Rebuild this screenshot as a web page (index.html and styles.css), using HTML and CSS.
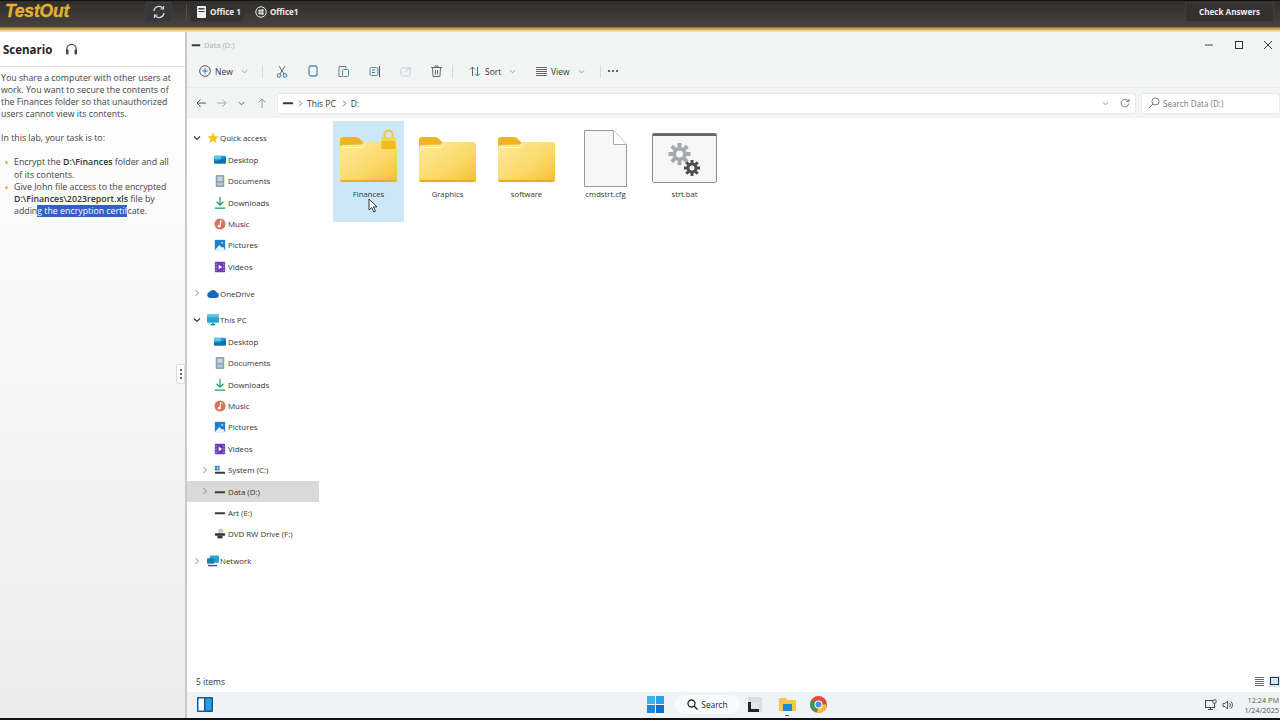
FILE: index.html
```html
<!DOCTYPE html>
<html lang="en">
<head>
<meta charset="utf-8">
<title>TestOut Lab</title>
<link rel="stylesheet" href="styles.css">
</head>
<body>
<svg class="defs" width="0" height="0" aria-hidden="true">
  <defs>
    <linearGradient id="fg" x1="0" y1="0" x2="1" y2="1"><stop offset="0" stop-color="#fdeaa0"/><stop offset=".6" stop-color="#fbd867"/><stop offset="1" stop-color="#f3bf35"/></linearGradient>
    <symbol id="folder" viewBox="0 0 57 45">
      <path d="M0 3a3 3 0 0 1 3-3h13c2 0 3 1 4 2l4 4v8H0z" fill="#eeb425"/>
      <path d="M0 11a3 3 0 0 1 3-3l18-.5 4-2.500h29a3 3 0 0 1 3 3V42a3 3 0 0 1-3 3H3a3 3 0 0 1-3-3z" fill="url(#fg)"/>
      <path d="M1 10h21l3-3v1l-3 3H1z" fill="#fff6d8"/>
      <path d="M0 43h57v0a3 2 0 0 1-3 2H3a3 2 0 0 1-3-2z" fill="#e5ad2b"/>
    </symbol>
    <symbol id="desk" viewBox="0 0 14 12"><rect x="0" y="1" width="14" height="9" rx="1" fill="#1b9fd8"/><path d="M0 7c4 0 8-1 14-4v6a1 1 0 0 1-1 1H1a1 1 0 0 1-1-1z" fill="#0c6fb0"/><rect x="0" y="1" width="8" height="4" fill="#56c5ef"/></symbol>
    <symbol id="docs" viewBox="0 0 14 14"><rect x="2" y="0" width="10" height="14" rx="1" fill="#8da3b5"/><rect x="4" y="2" width="6" height="5" fill="#c9d6df"/><rect x="4" y="9" width="6" height="1" fill="#d8e2e9"/><rect x="4" y="11" width="6" height="1" fill="#d8e2e9"/></symbol>
    <symbol id="down" viewBox="0 0 14 14"><path d="M7 0v9M3 5.500 7 9.500l4-4" fill="none" stroke="#1f9c82" stroke-width="1.500"/><path d="M1 13h12" stroke="#1f9c82" stroke-width="1.500"/></symbol>
    <symbol id="music" viewBox="0 0 14 14"><circle cx="7" cy="7" r="6.500" fill="#d9735c"/><path d="M7.500 3v6" stroke="#fff" stroke-width="1.300"/><circle cx="6" cy="9.500" r="1.600" fill="#fff"/><path d="M7.500 3l2.500 1" stroke="#fff"/></symbol>
    <symbol id="pics" viewBox="0 0 14 14"><rect x="1" y="1" width="12" height="12" fill="#1d7fd0"/><path d="M1 13l5-6 3 3 1.500-1 2.500 4z" fill="#e8f3fb"/><circle cx="9.500" cy="4.500" r="1.300" fill="#9ed3f5"/></symbol>
    <symbol id="vids" viewBox="0 0 14 14"><rect x="1" y="1" width="12" height="12" rx="1" fill="#6d3bb8"/><path d="M5.500 4.500v5l4-2.500z" fill="#fff"/><path d="M2.500 3v1.500M2.500 6.500V8M2.500 10v1.500M11.500 3v1.500M11.500 6.500V8M11.500 10v1.500" stroke="#d9c8f2"/></symbol>
    <symbol id="drive" viewBox="0 0 14 14"><rect x="1" y="6" width="12" height="2.600" rx=".8" fill="#3a3a3a"/></symbol>
    <symbol id="chevd" viewBox="0 0 8 8"><path d="M1 2.500 4 5.500 7 2.500" fill="none" stroke="currentColor" stroke-width="1.100"/></symbol>
    <symbol id="chevr" viewBox="0 0 8 8"><path d="M2.500 1 5.500 4 2.500 7" fill="none" stroke="currentColor"/></symbol>
  </defs>
</svg>

<header class="topbar">
  <span class="logo">TestOut</span>
  <button class="sync" aria-label="Sync">
    <svg width="14" height="14" viewBox="0 0 14 14" fill="none" stroke="#ddd" stroke-width="1.200"><path d="M2 6a5 5 0 0 1 9-2.500M12 8a5 5 0 0 1-9 2.500"/><path d="M11.500 1v3h-3M2.500 13v-3h3"/></svg>
  </button>
  <span class="vsep"></span>
  <div class="crumb">
    <svg width="9" height="12" viewBox="0 0 9 12"><rect width="9" height="12" rx="1" fill="#eee"/><rect x="1.500" y="2" width="6" height="1.500" fill="#444"/><rect x="1.500" y="5" width="6" height="1" fill="#444"/></svg>
    <b>Office 1</b>
  </div>
  <div class="crumb2">
    <svg width="12" height="12" viewBox="0 0 12 12"><circle cx="6" cy="6" r="5.200" fill="none" stroke="#eee"/><path d="M3.500 3.800 5.700 3.500V5.800H3.500zM6.200 3.400 8.500 3V5.800H6.200zM3.500 6.200H5.700V8.500L3.500 8.200zM6.200 6.200H8.500V9L6.200 8.600z" fill="#eee"/></svg>
    <b>Office1</b>
  </div>
  <button class="check">Check Answers</button>
</header>
<div class="goldline"></div>

<div class="stage">
  <aside class="scenario">
    <div class="sc-head">
      <h1>Scenario</h1>
      <svg width="13" height="12" viewBox="0 0 13 12" fill="none"><path d="M1.800 8V6a4.700 4.700 0 0 1 9.400 0v2" stroke="#444" stroke-width="1.200"/><rect x="1" y="6.500" width="2.500" height="5" rx="1" fill="#444"/><rect x="9.500" y="6.500" width="2.500" height="5" rx="1" fill="#444"/></svg>
    </div>
    <div class="sc-body">
      <p>You share a computer with other users at work. You want to secure the contents of the Finances folder so that unauthorized users cannot view its contents.</p>
      <p>In this lab, your task is to:</p>
      <ul>
        <li>Encrypt the <b>D:\Finances</b> folder and all of its contents.</li>
        <li>Give John file access to the encrypted <b>D:\Finances\2023report.xls</b> file by addin<mark>g the encryption certif</mark>cate.</li>
      </ul>
    </div>
    <div class="grip"><i></i><i></i><i></i></div>
  </aside>

  <section class="explorer">
    <div class="titlebar">
      <svg class="ic" width="10" height="10"><use href="#drive"/></svg>
      <span class="wintitle">Data (D:)</span>
      <div class="winctl">
        <svg width="10" height="10" viewBox="0 0 10 10"><path d="M1 5h8" stroke="#444"/></svg>
        <svg width="10" height="10" viewBox="0 0 10 10"><rect x="1.500" y="1.500" width="7" height="7" fill="none" stroke="#333"/></svg>
        <svg width="10" height="10" viewBox="0 0 10 10"><path d="M1 1l8 8M9 1l-8 8" stroke="#333"/></svg>
      </div>
    </div>

    <div class="toolbar">
      <div class="tb-text tb-new">
        <svg width="12" height="12" viewBox="0 0 12 12" fill="none"><circle cx="6" cy="6" r="5.300" stroke="#555"/><path d="M6 3.300v5.400M3.300 6h5.400" stroke="#2a78b8"/></svg>
        <span>New</span>
        <svg class="cv" width="7" height="7"><use href="#chevd"/></svg>
      </div>
      <span class="tsep"></span>
      <div class="tb-icon"><svg width="12" height="13" viewBox="0 0 12 13" fill="none"><path d="M3 1l5 8M9 1L4 9" stroke="#666"/><circle cx="3" cy="10.500" r="1.800" stroke="#2a78b8"/><circle cx="9" cy="10.500" r="1.800" stroke="#2a78b8"/></svg></div>
      <div class="tb-icon"><svg width="10" height="12" viewBox="0 0 10 12" fill="none"><rect x="1" y="1" width="8" height="10" rx="2" stroke="#5a8db0" stroke-width="1.300"/></svg></div>
      <div class="tb-icon"><svg width="11" height="12" viewBox="0 0 11 12" fill="none"><path d="M3 1.500H1v10h3" stroke="#777"/><path d="M3 1.500h5v2" stroke="#777"/><rect x="4.500" y="4.500" width="6" height="7" rx="1" stroke="#3f8abf"/></svg></div>
      <div class="tb-icon"><svg width="12" height="11" viewBox="0 0 12 11" fill="none"><rect x="1" y="1.500" width="8" height="8" rx="1.500" stroke="#4b8fb5"/><path d="M3 4h3M3 6.500h3" stroke="#666"/><path d="M10.500 0v11" stroke="#555"/></svg></div>
      <div class="tb-icon dim"><svg width="12" height="11" viewBox="0 0 12 11" fill="none"><rect x="1" y="2" width="9" height="8" rx="1.500" stroke="#c3d2da"/><path d="M5 6l5-4M8 1.500h3v3" stroke="#c3d2da"/></svg></div>
      <div class="tb-icon"><svg width="11" height="12" viewBox="0 0 11 12" fill="none" stroke="#666"><path d="M0 2.500h11M4 2.500V1h3v1.500M1.500 2.500l.6 9h6.800l.6-9M4.500 5v4.500M6.500 5v4.500"/></svg></div>
      <span class="tsep"></span>
      <div class="tb-text tb-sort">
        <svg width="12" height="11" viewBox="0 0 12 11" fill="none"><path d="M3.500 10V1M1 3.500 3.500 1 6 3.500" stroke="#666"/><path d="M8.500 1v9M6 7.500 8.500 10 11 7.500" stroke="#2a78b8"/></svg>
        <span>Sort</span>
        <svg class="cv" width="7" height="7"><use href="#chevd"/></svg>
      </div>
      <div class="tb-text tb-view">
        <svg width="11" height="9" viewBox="0 0 11 9" stroke="#666"><path d="M0 .5h11M0 2.500h11M0 4.500h11M0 6.500h11M0 8.500h11"/></svg>
        <span>View</span>
        <svg class="cv" width="7" height="7"><use href="#chevd"/></svg>
      </div>
      <span class="tsep"></span>
      <div class="dots"><i></i><i></i><i></i></div>
    </div>

    <div class="addr">
      <svg class="nv nv1" width="10" height="10" viewBox="0 0 10 10" fill="none" stroke="#555"><path d="M10 5H1M4.500 1.500 1 5l3.500 3.500"/></svg>
      <svg class="nv nv2" width="10" height="10" viewBox="0 0 10 10" fill="none" stroke="#aaa"><path d="M0 5h9M5.500 1.500 9 5 5.500 8.500"/></svg>
      <svg class="nv nv3" width="7" height="7"><use href="#chevd"/></svg>
      <svg class="nv nv4" width="10" height="10" viewBox="0 0 10 10" fill="none" stroke="#999"><path d="M5 10V1M1.500 4.500 5 1l3.500 3.500"/></svg>
      <div class="pathbox">
        <svg width="12" height="12"><use href="#drive"/></svg>
        <svg class="sm" width="7" height="7"><use href="#chevr"/></svg>
        <span class="seg">This PC</span>
        <svg class="sm" width="7" height="7"><use href="#chevr"/></svg>
        <span>D:</span>
        <span class="grow"></span>
        <svg class="cv" width="7" height="7"><use href="#chevd"/></svg>
        <svg class="rf" width="10" height="10" viewBox="0 0 10 10" fill="none" stroke="#777"><path d="M8.700 5.500a3.800 3.800 0 1 1-1-3L9 3.500M9 .8v2.700H6.300"/></svg>
      </div>
      <div class="searchbox">
        <svg width="12" height="12" viewBox="0 0 12 12" fill="none" stroke="#777"><circle cx="7.500" cy="4.500" r="3.500"/><path d="M5 7l-4 4"/></svg>
        <span>Search Data (D:)</span>
      </div>
    </div>

    <div class="main">
      <nav class="tree">
        <div class="row l0"><svg class="tw" width="8" height="8"><use href="#chevd"/></svg><svg width="12" height="12" viewBox="0 0 12 12"><path d="M6 .5l1.700 3.600 3.800.5-2.800 2.700.7 3.900L6 8.800l-3.400 1.900.7-3.900L.5 4.600l3.800-.5z" fill="#f5c518"/></svg><span>Quick access</span></div>
        <div class="row l1"><svg class="ti"><use href="#desk"/></svg><span>Desktop</span></div>
        <div class="row l1"><svg class="ti"><use href="#docs"/></svg><span>Documents</span></div>
        <div class="row l1"><svg class="ti"><use href="#down"/></svg><span>Downloads</span></div>
        <div class="row l1"><svg class="ti"><use href="#music"/></svg><span>Music</span></div>
        <div class="row l1"><svg class="ti"><use href="#pics"/></svg><span>Pictures</span></div>
        <div class="row l1"><svg class="ti"><use href="#vids"/></svg><span>Videos</span></div>
        <div class="row l0 gap"><svg class="tw lt" width="8" height="8"><use href="#chevr"/></svg><svg width="12" height="9" viewBox="0 0 12 9"><path d="M3 9a3 3 0 0 1-.5-5.900A4 4 0 0 1 9.800 3.500 2.800 2.800 0 0 1 9.500 9z" fill="#1668b8"/></svg><span>OneDrive</span></div>
        <div class="row l0 gap"><svg class="tw" width="8" height="8"><use href="#chevd"/></svg><svg width="12" height="12" viewBox="0 0 13 12"><rect x="0" y="0" width="13" height="9" rx="1" fill="#2ba4cf"/><rect x="0" y="0" width="13" height="3" fill="#5cc6e4"/><path d="M4 11h5M6.500 9v2" stroke="#1a7799" stroke-width="1.400"/></svg><span>This PC</span></div>
        <div class="row l1"><svg class="ti"><use href="#desk"/></svg><span>Desktop</span></div>
        <div class="row l1"><svg class="ti"><use href="#docs"/></svg><span>Documents</span></div>
        <div class="row l1"><svg class="ti"><use href="#down"/></svg><span>Downloads</span></div>
        <div class="row l1"><svg class="ti"><use href="#music"/></svg><span>Music</span></div>
        <div class="row l1"><svg class="ti"><use href="#pics"/></svg><span>Pictures</span></div>
        <div class="row l1"><svg class="ti"><use href="#vids"/></svg><span>Videos</span></div>
        <div class="row l1"><svg class="tw2 lt" width="8" height="8"><use href="#chevr"/></svg><svg class="ti" viewBox="0 0 14 12"><path d="M1 1h2.500v2.500H1zM4 1h2.500v2.500H4zM1 4h2.500v2.500H1zM4 4h2.500v2.500H4z" fill="#1f7fc4"/><rect x="1" y="8" width="12" height="2.500" rx=".8" fill="#3a3a3a"/></svg><span>System (C:)</span></div>
        <div class="row l1 cur"><svg class="tw2 lt" width="8" height="8"><use href="#chevr"/></svg><svg class="ti"><use href="#drive"/></svg><span>Data (D:)</span></div>
        <div class="row l1"><svg class="ti"><use href="#drive"/></svg><span>Art (E:)</span></div>
        <div class="row l1"><svg class="ti" viewBox="0 0 14 14"><circle cx="8" cy="3.500" r="3" fill="#c8c8c8"/><rect x="1" y="6" width="12" height="3" rx=".8" fill="#333"/><rect x="4" y="9" width="6" height="3" fill="#333"/></svg><span>DVD RW Drive (F:)</span></div>
        <div class="row l0 gap"><svg class="tw lt" width="8" height="8"><use href="#chevr"/></svg><svg width="12" height="12" viewBox="0 0 13 12"><rect x="3" y="0" width="10" height="8" rx="1" fill="#2ba4cf"/><rect x="0" y="3" width="8" height="6" rx="1" fill="#1682b0"/><path d="M1 11h10" stroke="#1c5f80" stroke-width="1.500"/></svg><span>Network</span></div>
      </nav>

      <div class="files">
        <div class="tile sel">
          <div class="thumb"><svg class="fd" width="57" height="45"><use href="#folder"/></svg>
            <svg class="lock" width="15" height="20" viewBox="0 0 15 20"><path d="M3.500 9V5.500a4 4 0 0 1 8 0V9" fill="none" stroke="#eec23a" stroke-width="2"/><rect x="0.500" y="8" width="14" height="12" rx="1" fill="#f0bb1e"/><rect x="0.500" y="8" width="14" height="4" fill="#f8d64e"/></svg>
          </div>
          <span>Finances</span>
        </div>
        <div class="tile"><div class="thumb"><svg class="fd" width="57" height="45"><use href="#folder"/></svg></div><span>Graphics</span></div>
        <div class="tile"><div class="thumb"><svg class="fd" width="57" height="45"><use href="#folder"/></svg></div><span>software</span></div>
        <div class="tile"><div class="thumb"><svg width="43" height="57" viewBox="0 0 43 57"><path d="M.5.500h29l13 14v42H.500z" fill="#f7f7f7" stroke="#999"/><path d="M29.500.500v14h13" fill="#fff" stroke="#aaa"/></svg></div><span>cmdstrt.cfg</span></div>
        <div class="tile"><div class="thumb"><svg width="65" height="50" viewBox="0 0 65 50"><rect x=".5" y=".5" width="64" height="49" rx="2" fill="#f7f7f7" stroke="#8a8a8a"/><rect x=".5" y=".5" width="64" height="2.500" fill="#666"/><g fill="#a3a9ad"><circle cx="27.500" cy="21" r="7"/><g stroke="#a3a9ad" stroke-width="4"><path d="M27.500 10v22M16.500 21h22M19.700 13.200l15.600 15.600M35.300 13.200 19.700 28.800"/></g></g><circle cx="27.500" cy="21" r="3.500" fill="#f7f7f7"/><g fill="#4a4f52"><circle cx="40" cy="35" r="5.500"/><g stroke="#4a4f52" stroke-width="3"><path d="M40 27v16M32 35h16M34.300 29.300l11.400 11.400M45.700 29.300 34.300 40.700"/></g></g><circle cx="40" cy="35" r="2.500" fill="#f7f7f7"/></svg></div><span>strt.bat</span></div>
      </div>
      <svg class="cursor" width="10" height="15" viewBox="0 0 10 15"><path d="M1 1v11l2.700-2.400 2 4.400 1.800-.8-2-4.300H9z" fill="#fff" stroke="#222" stroke-width=".9"/></svg>
    </div>

    <div class="status">
      <span>5 items</span>
      <div class="views">
        <svg width="9" height="9" viewBox="0 0 9 9" stroke="#666"><path d="M0 .5h9M0 2.500h9M0 4.500h9M0 6.500h9M0 8.500h9"/></svg>
        <span class="viewon"><svg width="9" height="8" viewBox="0 0 9 8"><rect x=".5" y=".5" width="8" height="7" fill="none" stroke="#333"/></svg></span>
      </div>
    </div>

    <footer class="taskbar">
      <svg class="widgets" width="16" height="15" viewBox="0 0 16 15"><rect width="16" height="15" rx="1" fill="#0a5d9f"/><rect x="1.500" y="1.500" width="5.500" height="12" fill="#fff"/><rect x="8.500" y="1.500" width="6" height="12" fill="#2f9be3"/></svg>
      <div class="tb-center">
        <svg class="win" width="17" height="17" viewBox="0 0 17 17"><path d="M0 0h8v8H0z" fill="#3fb1ee"/><path d="M9 0h8v8H9z" fill="#2c9fe6"/><path d="M0 9h8v8H0z" fill="#1f86d6"/><path d="M9 9h8v8H9z" fill="#0f6fc4"/></svg>
        <div class="pill"><svg width="11" height="11" viewBox="0 0 11 11" fill="none" stroke="#222" stroke-width="1.300"><circle cx="4.500" cy="4.500" r="3.500"/><path d="M7 7l3.500 3.500"/></svg><span>Search</span></div>
        <svg class="app1" width="14" height="15" viewBox="0 0 14 15"><rect width="14" height="15" fill="#dcdcdc"/><rect y="5" width="11" height="10" fill="#222"/><rect x="3" y="5" width="8" height="7" fill="#e6e6e6"/></svg>
        <span class="app2"><svg width="17" height="15" viewBox="0 0 17 15"><path d="M0 1h7l2 2h8v11H0z" fill="#f5c93f"/><rect x="4" y="7" width="9" height="7" fill="#1d8ad0"/></svg><i></i></span>
        <svg class="app3" width="17" height="17" viewBox="0 0 17 17"><circle cx="8.500" cy="8.500" r="8.500" fill="#e04a3a"/><path d="M8.500 8.500 1.300 4a8.500 8.500 0 0 0 5 12.200z" fill="#2f9e4f"/><path d="M8.500 8.500h8a8.500 8.500 0 0 1-9.500 8.400z" fill="#f5c62f"/><circle cx="8.500" cy="8.500" r="4" fill="#fff"/><circle cx="8.500" cy="8.500" r="3" fill="#4a8ee8"/></svg>
      </div>
      <div class="tray">
        <svg width="12" height="12" viewBox="0 0 12 12" fill="none" stroke="#444"><rect x=".5" y="1.500" width="9" height="7"/><path d="M3 10.500h5M5.500 8.500v2"/><circle cx="9.500" cy="2.500" r="1.800" fill="#fff"/></svg>
        <svg width="12" height="10" viewBox="0 0 12 10" fill="none" stroke="#555"><path d="M1 3.500v3h2L5.500 9V1L3 3.500zM7.500 3a3 3 0 0 1 0 4M9 1.500a5 5 0 0 1 0 7"/></svg>
        <div class="clock"><span>12:24 PM</span><span>1/24/2025</span></div>
      </div>
    </footer>
  </section>
</div>
<div class="blackline"></div>
</body>
</html>
```

FILE: styles.css
```css
* { box-sizing: border-box; }
html, body { margin: 0; height: 720px; overflow: hidden; }
body {
  display: flex; flex-direction: column; width: 1280px;
  font-family: "Open Sans", "Noto Sans", sans-serif; color: #333; background: #fff;
}
.defs { position: absolute; }
svg { display: block; flex: none; }
button { font-family: inherit; }

.topbar {
  height: 27px; display: flex; align-items: center; flex: none; padding-bottom: 5px;
  border-top: 1px solid #111;
  background: linear-gradient(#2f2e2c, #45433f);
  color: #eee;
}
.logo {
  width: 145px; padding-left: 5px;
  font: italic bold 17.500px "Liberation Sans", sans-serif; color: #e6b02f; letter-spacing: -.2px;
  -webkit-text-stroke: .3px #e6b02f;
}
.sync {
  width: 27px; height: 20px; display: flex; align-items: center; justify-content: center; padding: 0;
  background: #37363a; border: 1px solid #3f3e3c; border-radius: 2px;
}
.vsep { width: 1px; height: 18px; background: #4c4b48; margin: 0 4px 0 14px; }
.crumb {
  width: 56px; height: 20px; display: flex; align-items: center; gap: 4px; padding-left: 6px;
  background: #333230; font-size: 8.100px;
  clip-path: polygon(0 0, 88% 0, 100% 50%, 88% 100%, 0 100%);
}
.crumb2 { display: flex; align-items: center; gap: 3px; margin-left: 8px; font-size: 8px; }
.check {
  margin-left: auto; margin-right: 6px; width: 89px; height: 20px; padding: 0;
  background: #333230; border: 1px solid #3f3e3c; color: #eee; font-size: 8.100px; font-weight: 700;
}
.goldline {
  height: 5px; flex: none;
  background: linear-gradient(#8f6a1c, #c9a24a 35%, #ecd9a6 80%, #dfe6e6);
}

.stage { flex: 1; min-height: 0; display: flex; }
.blackline { height: 2px; flex: none; background: #111; }

/* Scenario panel */
.scenario {
  position: relative; width: 187px; flex: none;
  background: linear-gradient(#fff, #fafafa 30%, #ececec);
  border-right: 2px solid #c9c9c9;
}
.sc-head {
  height: 35px; display: flex; align-items: center; gap: 13px; padding-left: 3px;
  border-bottom: 1px solid #e2e2e2; background: #fff;
}
.sc-head h1 { margin: 0; font-size: 11.500px; font-weight: 700; color: #222; }
.sc-body { padding: 5px 0 0 1px; font-size: 8.800px; line-height: 12.100px; color: #444; }
.sc-body p { margin: 0 0 12px; width: 172px; }
.sc-body ul { margin: 0; padding: 0 0 0 13px; list-style: none; width: 172px; }
.sc-body li { position: relative; }
.sc-body li::before {
  content: ""; position: absolute; left: -9px; top: 5px; width: 3px; height: 3px;
  border-radius: 50%; background: #e6b64a;
}
.sc-body b { color: #333; font-weight: 600; }
mark { background: #2f62c4; color: #fff; }
.grip {
  position: absolute; right: 0; top: 332px; width: 9px; height: 20px;
  display: flex; flex-direction: column; align-items: center; justify-content: center; gap: 2px;
  background: #fff; border-radius: 2px; border: 1px solid #ddd;
}
.grip i { width: 2px; height: 2px; background: #333; border-radius: 50%; }

/* Explorer */
.explorer { flex: 1; min-width: 0; display: flex; flex-direction: column; font-size: 7.900px; color: #333; }
.titlebar {
  height: 25px; flex: none; display: flex; align-items: center; gap: 3px; padding: 0 7px 0 4px;
  background: #f2f4f4; font-size: 7.600px;
}
.wintitle { color: #aab0b3; }
.winctl { margin-left: auto; display: flex; gap: 19.500px; }

.toolbar {
  height: 31px; flex: none; display: flex; align-items: center; padding: 0 0 2px 12px;
  background: #f3f5f5; border-bottom: 1px solid #ebeded; font-size: 8.500px;
}
.tb-text { display: flex; align-items: center; gap: 4px; }
.tb-new { width: 63px; }
.tb-sort { width: 67px; margin-left: 16px; }
.tb-view { width: 61px; margin-right: 3px; }
.cv { color: #999; margin-left: 4px; }
.tsep { width: 1px; height: 13px; background: #d8dada; }
.tb-new + .tsep { margin-right: 3px; }
.tb-icon { width: 31px; display: flex; justify-content: center; }
.dots { display: flex; gap: 2px; margin-left: 7px; }
.dots i { width: 2px; height: 2px; background: #333; border-radius: 50%; }

.addr {
  height: 30px; flex: none; display: flex; align-items: center; padding-left: 9px;
  background: #f3f5f5;
}
.nv { color: #555; }
.nv2 { margin-left: 11px; }
.nv3 { margin-left: 11px; }
.nv4 { margin-left: 12px; }
.pathbox {
  margin-left: 10px; width: 859px; height: 21px; display: flex; align-items: center; gap: 3px; padding: 0 5px 0 4px;
  background: #fff; border: 1px solid #e8e9e9; border-radius: 2px; font-size: 8.500px;
}
.seg { margin-right: 2px; }
.sm { color: #666; }
.grow { flex: 1; }
.rf { margin-left: 8px; }
.pathbox .cv { margin-left: 0; }
.searchbox {
  margin-left: 5px; flex: 1; height: 21px; display: flex; align-items: center; gap: 3px; padding-left: 6px;
  background: #fff; border: 1px solid #e8e9e9; border-radius: 2px; color: #777; font-size: 8.100px;
}

.main { position: relative; flex: 1; min-height: 0; display: flex; background: #fff; }
.tree { width: 132px; flex: none; padding-top: 9.800px; }
.row { height: 21.400px; display: flex; align-items: center; position: relative; }
.row.l0 { padding-left: 20px; gap: 1px; }
.row.l1 { padding-left: 27px; gap: 2px; }
.ti { width: 12px; height: 12px; }
.row.gap { margin-top: 5.400px; }
.row.cur { background: #d9d9d9; }
.tw, .tw2 { position: absolute; top: 6.500px; color: #333; }
.tw { left: 6px; }
.tw2 { left: 14px; }
.lt { color: #888; }

.files { flex: 1; display: flex; align-items: flex-start; gap: 8px; padding: 3px 0 0 14px; }
.tile {
  width: 71px; height: 101px; display: flex; flex-direction: column; align-items: center;
  color: #333; font-size: 7.700px;
}
.tile.sel { background: #cce8f8; }
.thumb { position: relative; height: 74px; width: 100%; flex: none; display: flex; align-items: center; justify-content: center; }
.thumb .fd { margin-top: 3px; }
.tile span { margin-top: -6px; }
.lock { position: absolute; left: 48px; top: 8px; }
.cursor { position: absolute; left: 181px; top: 80px; }

.status {
  height: 20px; flex: none; display: flex; align-items: center; justify-content: space-between; padding: 0 0 2px 9px;
  background: #fff; font-size: 8.500px;
}
.views { display: flex; align-items: center; gap: 5px; }
.viewon { width: 11px; height: 11px; display: flex; align-items: center; justify-content: center; background: #cfe8f7; }

.taskbar {
  position: relative; height: 26px; flex: none; display: flex; align-items: center; padding: 0 0 1px 10px;
  background: #f0f3f5;
}
.tb-center { display: flex; align-items: center; margin-left: 434px; }
.pill {
  width: 65px; height: 19px; margin-left: 11px; display: flex; align-items: center; justify-content: center; gap: 3px;
  background: #f9fafb; border-radius: 10px; color: #222; font-size: 8.300px;
}
.app1 { margin-left: 8px; }
.app2 { position: relative; margin-left: 17px; }
.app2 i { position: absolute; left: 6px; bottom: -4px; width: 4px; height: 1.500px; background: #666; }
.app3 { margin-left: 14px; }
.tray { margin-left: auto; display: flex; align-items: center; gap: 5px; padding-right: 1px; }
.clock { display: flex; flex-direction: column; align-items: flex-end; font-size: 7.300px; line-height: 10px; color: #555; margin-left: 5px; }
```
